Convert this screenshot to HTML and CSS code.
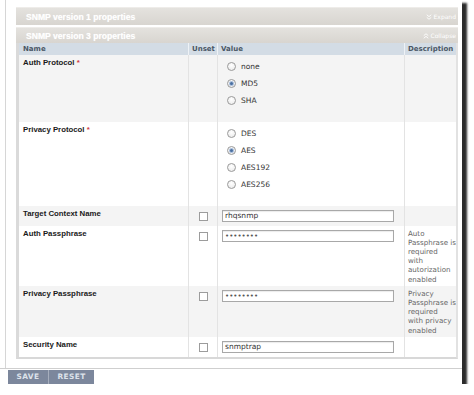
FILE: index.html
```html
<!DOCTYPE html>
<html>
<head>
<meta charset="utf-8">
<link rel="stylesheet" href="styles.css">
</head>
<body>
<div class="shot">
  <div class="frame-outer">
    <div class="frame">
      <div class="panel">
        <div class="sect sect1">
          <span class="sect-title">SNMP version 1 properties</span>
          <span class="sect-tool"><svg class="chev" viewBox="0 0 8 8" width="6" height="6"><path d="M1 1 L4 3.5 L7 1 M1 4.5 L4 7 L7 4.5" fill="none" stroke="#ffffff" stroke-width="1.2"/></svg>Expand</span>
        </div>
        <div class="sect sect2">
          <span class="sect-title">SNMP version 3 properties</span>
          <span class="sect-tool"><svg class="chev" viewBox="0 0 8 8" width="6" height="6"><path d="M1 3.5 L4 1 L7 3.5 M1 7 L4 4.5 L7 7" fill="none" stroke="#ffffff" stroke-width="1.2"/></svg>Collapse</span>
        </div>
        <table class="props">
          <colgroup>
            <col class="col-name">
            <col class="col-unset">
            <col class="col-value">
            <col class="col-desc">
          </colgroup>
          <thead>
            <tr>
              <th class="h-name">Name</th>
              <th class="h-unset">Unset</th>
              <th class="h-value">Value</th>
              <th class="h-desc">Description</th>
            </tr>
          </thead>
          <tbody>
            <tr class="odd">
              <td class="c-name">Auth Protocol <span class="req">*</span></td>
              <td class="c-unset"></td>
              <td class="c-value radios">
                <div class="opt"><span class="radio"></span>none</div>
                <div class="opt"><span class="radio on"></span>MD5</div>
                <div class="opt"><span class="radio"></span>SHA</div>
              </td>
              <td class="c-desc"></td>
            </tr>
            <tr class="even">
              <td class="c-name">Privacy Protocol <span class="req">*</span></td>
              <td class="c-unset"></td>
              <td class="c-value radios">
                <div class="opt"><span class="radio"></span>DES</div>
                <div class="opt"><span class="radio on"></span>AES</div>
                <div class="opt"><span class="radio"></span>AES192</div>
                <div class="opt"><span class="radio"></span>AES256</div>
              </td>
              <td class="c-desc"></td>
            </tr>
            <tr class="odd">
              <td class="c-name">Target Context Name</td>
              <td class="c-unset"><span class="check"></span></td>
              <td class="c-value"><div class="field">rhqsnmp</div></td>
              <td class="c-desc"></td>
            </tr>
            <tr class="even">
              <td class="c-name">Auth Passphrase</td>
              <td class="c-unset"><span class="check"></span></td>
              <td class="c-value"><div class="field dots">••••••••</div></td>
              <td class="c-desc">Auto<br>Passphrase is<br>required<br>with<br>autorization<br>enabled</td>
            </tr>
            <tr class="odd">
              <td class="c-name">Privacy Passphrase</td>
              <td class="c-unset"><span class="check"></span></td>
              <td class="c-value"><div class="field dots">••••••••</div></td>
              <td class="c-desc">Privacy<br>Passphrase is<br>required<br>with privacy<br>enabled</td>
            </tr>
            <tr class="even">
              <td class="c-name">Security Name</td>
              <td class="c-unset"><span class="check"></span></td>
              <td class="c-value"><div class="field">snmptrap</div></td>
              <td class="c-desc"></td>
            </tr>
          </tbody>
        </table>
      </div>
    </div>
  </div>
  <div class="buttons">
    <span class="btn">SAVE</span><span class="btn">RESET</span>
  </div>
</div>
</body>
</html>
```
FILE: styles.css
```css
html, body {
  margin: 0;
  padding: 0;
  background: #ffffff;
}
body {
  font-family: "DejaVu Sans", sans-serif;
}
.shot {
  width: 462px;
  height: 384px;
  background: #ffffff;
  box-shadow: 4px 4px 2px 1px rgba(25, 25, 25, 0.92);
  overflow: hidden;
}
.frame-outer {
  height: 368px;
  border-bottom: 1px solid #cfcfcf;
}
.frame {
  margin-left: 5px;
  height: 368px;
  border-left: 1px solid #d6d6d6;
  overflow: hidden;
}
.panel {
  margin-left: 10px;
  padding-top: 7px;
  width: 442px;
}
.sect {
  display: flex;
  align-items: center;
  justify-content: space-between;
  background: linear-gradient(#e4e2de, #d8d5d0);
  border-top: 1px solid #eeece9;
  color: #ffffff;
  box-sizing: border-box;
}
.sect1 {
  height: 18px;
  margin-bottom: 2px;
}
.sect2 {
  height: 16px;
}
.sect-title {
  padding-left: 10px;
  font-family: "Liberation Sans", sans-serif;
  font-weight: bold;
  font-size: 8.6px;
  text-shadow: 0 0 1px rgba(255,255,255,0.6);
}
.sect-tool {
  display: flex;
  align-items: center;
  gap: 2px;
  padding-right: 2px;
  font-size: 6px;
}
.props {
  width: 442px;
  table-layout: fixed;
  border-collapse: separate;
  border-spacing: 0;
  border-left: 3px solid #dadada;
  border-right: 2px solid #e2e2e2;
  border-bottom: 2px solid #d8d8d8;
}
.col-name { width: 169px; }
.col-unset { width: 29px; }
.col-value { width: 187px; }
.col-desc { width: 52px; }
.props th {
  height: 12px;
  padding: 0 0 0 3px;
  background: #d3dce5;
  color: #4a5766;
  font-size: 7px;
  font-weight: bold;
  text-align: left;
  border-left: 1px solid #eef2f6;
  box-sizing: border-box;
  line-height: 12px;
}
.props th.h-name {
  border-left: none;
  padding-left: 4px;
}
.props td {
  vertical-align: top;
  padding: 0;
  border-left: 1px solid #e3e3e3;
  box-sizing: border-box;
}
.props td.c-name {
  border-left: none;
  padding: 3px 0 0 4px;
  font-family: "Liberation Sans", sans-serif;
  font-weight: bold;
  font-size: 7.8px;
  line-height: 9px;
  color: #1a1a1a;
}
.req {
  color: #d23b3b;
}
tr.odd td { background: #f4f4f4; }
tr.even td { background: #ffffff; }
.radios {
  padding: 3px 0 13px 0 !important;
}
.opt {
  height: 17px;
  display: flex;
  align-items: center;
  padding-left: 9px;
  font-size: 7.5px;
  color: #333333;
}
.radio {
  width: 7px;
  height: 7px;
  border: 1px solid #9a9a9a;
  border-radius: 50%;
  background: radial-gradient(circle at 50% 35%, #ffffff, #e8e8e8);
  margin-right: 5px;
  display: flex;
  align-items: center;
  justify-content: center;
  box-sizing: content-box;
}
.radio.on::after {
  content: "";
  width: 3px;
  height: 3px;
  border-radius: 50%;
  background: #4a6fa0;
  box-shadow: 0 0 0 1px #a9bedb;
}
.c-unset {
  text-align: center;
}
.check {
  display: inline-block;
  margin-top: 5px;
  width: 7px;
  height: 7px;
  border: 1px solid #9c9c9c;
  background: #ffffff;
}
.field {
  margin: 4px 0 4px 4px;
  width: 172px;
  height: 12px;
  box-sizing: border-box;
  border: 1px solid #a8a8a8;
  box-shadow: inset 0 1px 1px rgba(0,0,0,0.08);
  background: #ffffff;
  font-size: 7.5px;
  line-height: 10px;
  padding-left: 2px;
  color: #333333;
}
.field.dots {
  color: #555555;
  font-size: 7px;
}
.props td.c-desc {
  padding: 2.5px 0 2.5px 3px;
  font-size: 7.1px;
  line-height: 9.2px;
  color: #666666;
  white-space: nowrap;
  overflow: hidden;
}
.buttons {
  display: flex;
  padding: 1px 0 0 8px;
}
.btn {
  height: 14px;
  line-height: 14px;
  background: #7c879c;
  color: #dde2ea;
  font-size: 7.4px;
  font-weight: bold;
  letter-spacing: 0.4px;
  text-align: center;
  box-sizing: border-box;
}
.btn:first-child {
  width: 40px;
}
.btn + .btn {
  width: 46px;
  border-left: 1px solid #a6aebd;
}
```
